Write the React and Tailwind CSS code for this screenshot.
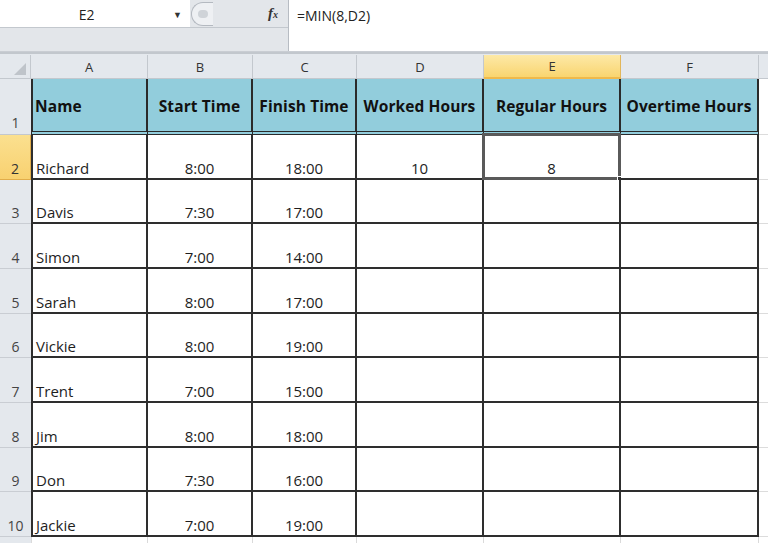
const cols = [
  { key: 'A', w: 'w-[117px]' },
  { key: 'B', w: 'w-[105px]' },
  { key: 'C', w: 'w-[104px]' },
  { key: 'D', w: 'w-[127px]' },
  { key: 'E', w: 'w-[137px]' },
  { key: 'F', w: 'w-[138px]' },
]

const rows = [
  ['Richard', '8:00', '18:00', '10', '8', ''],
  ['Davis', '7:30', '17:00', '', '', ''],
  ['Simon', '7:00', '14:00', '', '', ''],
  ['Sarah', '8:00', '17:00', '', '', ''],
  ['Vickie', '8:00', '19:00', '', '', ''],
  ['Trent', '7:00', '15:00', '', '', ''],
  ['Jim', '8:00', '18:00', '', '', ''],
  ['Don', '7:30', '16:00', '', '', ''],
  ['Jackie', '7:00', '19:00', '', '', ''],
]

const headers = ['Name', 'Start Time', 'Finish Time', 'Worked Hours', 'Regular Hours', 'Overtime Hours']

const FormulaBar = () => (
  <div className="flex h-[52px] border-b border-[#c9cdd3]">
    <div className="flex w-[289px] flex-col border-r border-[#b7bcc3] bg-[#e3e6ea]">
      <div className="flex h-[28px] border-b border-[#c3c8ce]">
        <div className="flex w-[190px] items-center bg-white pt-[2px]">
          <span className="flex-1 text-center text-[14px] text-[#222]">E2</span>
          <span className="mr-[8px] text-[9px] text-[#333]">▼</span>
        </div>
        <div className="flex flex-1 items-center">
          <div className="ml-[1px] flex h-[24px] w-[22px] items-center rounded-l-full border border-r-0 border-[#b4b9c0] bg-[#eef0f3] pl-[6px]">
            <div className="h-[8px] w-[10px] rounded-full bg-[#cfd3d8]" />
          </div>
          <span className="ml-auto mr-[10px] font-['Liberation_Serif',serif] text-[15px] font-bold italic text-[#333]">
            f<span className="text-[10px]">x</span>
          </span>
        </div>
      </div>
      <div className="flex-1" />
    </div>
    <div className="flex-1 bg-white pl-[8px] pt-[5px] text-[14px] text-[#222]">=MIN(8,D2)</div>
  </div>
)

const ColumnHeader = () => (
  <div className="flex h-[27px] border-t-[2px] border-[#c2c7cd] bg-[#e4e8ed] pt-[1px]">
    <div className="relative w-[31px] border-r border-b border-[#c3c8ce]">
      <div className="absolute bottom-[3px] right-[4px] h-0 w-0 border-b-[12px] border-l-[12px] border-b-[#bfc4ca] border-l-transparent" />
    </div>
    {cols.map((c) =>
      c.key === 'E' ? (
        <div
          key={c.key}
          className={`${c.w} flex items-center justify-center border-r border-b-2 border-r-[#e2b65a] border-b-[#f0b94a] bg-gradient-to-b from-[#fde9a6] to-[#f9d56f] pt-[2px] text-[13px] text-[#333]`}
        >
          {c.key}
        </div>
      ) : (
        <div
          key={c.key}
          className={`${c.w} flex items-center justify-center border-r border-b border-[#c3c8ce] pt-[2px] text-[13px] text-[#333]`}
        >
          {c.key}
        </div>
      )
    )}
    <div className="flex-1 border-b border-[#c3c8ce]" />
  </div>
)

const HeaderRow = () => (
  <div className="flex h-[56px]">
    <div className="flex w-[31px] items-end justify-center border-b border-[#c3c8ce] bg-[#e4e8ed] pb-[1px] text-[14px] text-[#444]">
      1
    </div>
    {cols.map((c, i) => (
      <div
        key={c.key}
        className={`${c.w} flex items-center border-r-2 border-b-[4px] border-double border-[#2a2a2a] bg-[#92cddc] pt-[4px] text-[15.5px] font-bold tracking-[0.1px] text-[#111] ${
          i === 0 ? 'border-l-2 justify-start pl-[2px]' : 'justify-center'
        }`}
      >
        {headers[i]}
      </div>
    ))}
    <div className="flex-1 border-b border-[#dcdcdc]" />
  </div>
)

const DataRow = ({ n, cells }) => (
  <div className="flex h-[44.67px]">
    <div
      className={`flex w-[31px] items-end justify-center text-[14px] ${
        n === 2
          ? 'border-r border-b border-[#e1ad4a] bg-gradient-to-b from-[#fbe08f] to-[#f8d170] text-[#333]'
          : 'border-b border-[#c9cdd3] bg-[#e4e8ed] text-[#444]'
      }`}
    >
      {n}
    </div>
    {cols.map((c, i) => (
      <div
        key={c.key}
        className={`${c.w} relative flex items-end border-r-2 border-b-2 border-[#2e2e2e] bg-white text-[15px] leading-[20px] text-[#1e1e1e] ${
          i === 0 ? 'border-l-2 justify-start pl-[3px]' : 'justify-center'
        }`}
      >
        {cells[i]}
        {n === 2 && c.key === 'E' && (
          <>
            <div className="absolute inset-x-0 top-0 h-[1px] bg-[#c0573f]" />
            <div className="absolute -inset-[2px] border-[3px] border-[#5a5a5a]" />
            <div className="absolute -bottom-[5px] -right-[5px] h-[7px] w-[7px] border border-white bg-[#333]" />
          </>
        )}
      </div>
    ))}
    <div className="flex-1 border-b border-[#dcdcdc]" />
  </div>
)

const TrailingRow = () => (
  <div className="flex h-[20px]">
    <div className="w-[31px] bg-[#e4e8ed]" />
    {cols.map((c) => (
      <div key={c.key} className={`${c.w} border-r border-[#dadada] ${c.key === 'A' ? 'border-l border-l-[#dadada]' : ''}`} />
    ))}
    <div className="flex-1" />
  </div>
)

export default function App() {
  return (
    <div className="h-[543px] w-[768px] overflow-hidden bg-white font-['Open_Sans',sans-serif]">
      <FormulaBar />
      <ColumnHeader />
      <HeaderRow />
      {rows.map((r, i) => (
        <DataRow key={i} n={i + 2} cells={r} />
      ))}
      <TrailingRow />
    </div>
  )
}
